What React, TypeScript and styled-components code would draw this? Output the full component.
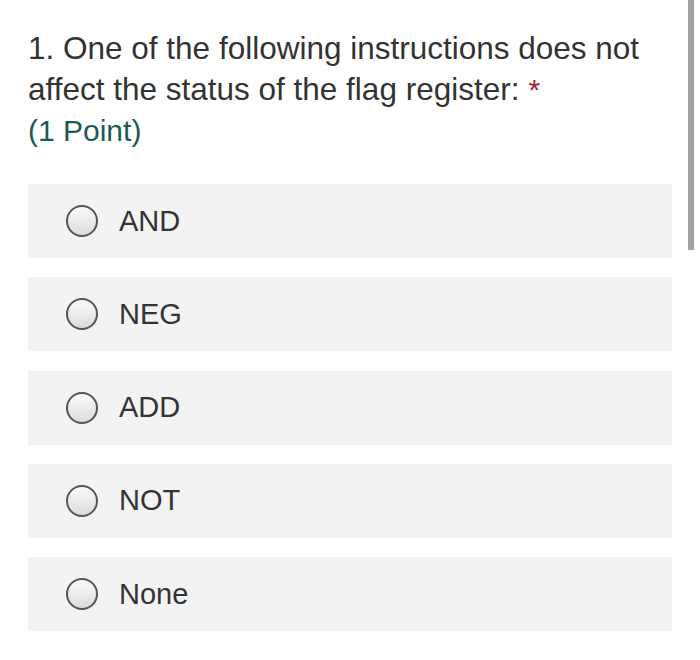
import * as React from 'react'
import styled, { createGlobalStyle } from 'styled-components'

const GlobalStyle = createGlobalStyle`
	html, body {
		margin: 0;
		padding: 0;
		background: #ffffff;
	}
	body {
		font-family: 'Liberation Sans', Arial, sans-serif;
	}
`

const Page = styled.div`
	padding: 28px 28px 0 28px;
	width: 700px;
	box-sizing: border-box;
`

const Question = styled.div`
	font-size: 31.5px;
	line-height: 41px;
	color: #333333;
`

const Required = styled.span`
	color: #a4262c;
	margin-left: 9px;
	font-size: 30px;
`

const Points = styled.div`
	color: #1c5b55;
	font-size: 30px;
`

const Options = styled.div`
	display: flex;
	flex-direction: column;
	gap: 19.3px;
	margin-top: 33px;
`

const Option = styled.label`
	display: flex;
	align-items: center;
	gap: 21px;
	height: 74px;
	padding-left: 38px;
	background: #f3f3f3;
	font-size: 29px;
	color: #333333;
`

const Radio = styled.span`
	width: 28px;
	height: 28px;
	border-radius: 50%;
	border: 2px solid #555555;
	background: linear-gradient(180deg, #fbfbfb 0%, #dcdcdc 100%);
	flex-shrink: 0;
`

const Scrollbar = styled.div`
	position: fixed;
	top: 0;
	left: 688px;
	width: 6px;
	height: 250px;
	background: #a3a3a3;
`

const choices = ['AND', 'NEG', 'ADD', 'NOT', 'None']

export default function App() {
	return (
		<>
			<GlobalStyle />
			<Page>
				<Question>
					1. One of the following instructions does not affect the status of the flag register:
					<Required>*</Required>
					<Points>(1 Point)</Points>
				</Question>
				<Options>
					{choices.map(c => (
						<Option key={c}>
							<Radio />
							{c}
						</Option>
					))}
				</Options>
			</Page>
			<Scrollbar />
		</>
	)
}
